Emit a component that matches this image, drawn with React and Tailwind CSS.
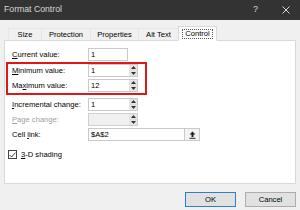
import React from 'react';

const font = { fontFamily: '"Liberation Sans", Arial, sans-serif' };

function Spinner() {
    return (
        <div className="flex flex-col w-[8px] h-full border-l border-[#e3e3e3] bg-[#f3f3f3]">
            <div className="flex-1 flex items-center justify-center border-b border-[#dcdcdc] bg-[#e6e6e6]">
                <svg width="5" height="3" viewBox="0 0 5 3"><path d="M0 3 L2.5 0 L5 3 Z" fill="#333" /></svg>
            </div>
            <div className="flex-1 flex items-center justify-center bg-[#e6e6e6]">
                <svg width="5" height="3" viewBox="0 0 5 3"><path d="M0 0 L2.5 3 L5 0 Z" fill="#333" /></svg>
            </div>
        </div>
    );
}

function Row({ label, value, spin, disabled, width = 'w-[50px]', children }) {
    return (
        <div className="flex items-center h-[13px]">
            <div className={`w-[76px] text-[7.6px] leading-none ${disabled ? 'text-[#a0a0a0]' : 'text-black'}`}>
                {label}
            </div>
            <div
                className={`flex items-stretch h-full ${width} border ${disabled ? 'border-[#cfcfcf] bg-[#f0f0f0]' : 'border-[#c9c9c9] bg-white'}`}
            >
                <div className="flex-1 flex items-center pl-[2px] text-[7.6px] leading-none text-black">{value}</div>
                {spin && <Spinner />}
                {children}
            </div>
        </div>
    );
}

function Tab({ label, w, active }) {
    if (active) {
        return (
            <div className={`${w} h-[15px] -mb-px relative z-10 flex items-center justify-center bg-white border border-[#d9d9d9] border-b-white`}>
                <span className="px-[2px] border border-dotted border-[#555] text-[7.6px] leading-[8px] text-black">{label}</span>
            </div>
        );
    }
    return (
        <div className={`${w} h-[12px] mt-[3px] flex items-center justify-center bg-[#f0f0f0] border-t border-l border-[#e6e6e6] text-[7.6px] leading-none text-black`}>
            {label}
        </div>
    );
}

export default function App() {
    return (
        <div className="w-[300px] h-[210px] flex flex-col bg-[#f0f0f0] overflow-hidden" style={font}>
            {/* Title bar */}
            <div className="h-[20px] bg-[#333333] flex items-center justify-between pl-[4px] pr-[10px]">
                <span className="text-[8.7px] text-[#d8d8d8]">Format Control</span>
                <div className="flex items-center gap-[24px] text-[#d8d8d8]">
                    <span className="text-[9px]">?</span>
                    <svg width="8" height="8" viewBox="0 0 8 8"><path d="M0.5 0.5 L7.5 7.5 M7.5 0.5 L0.5 7.5" stroke="#d8d8d8" strokeWidth="1" /></svg>
                </div>
            </div>

            {/* Tabs */}
            <div className="flex items-end pl-[8px] mt-[6px] h-[14px]">
                <Tab label="Size" w="w-[33px]" />
                <Tab label="Protection" w="w-[49px]" />
                <Tab label="Properties" w="w-[48px]" />
                <Tab label="Alt Text" w="w-[40px]" />
                <Tab label="Control" w="w-[39px]" active />
            </div>

            {/* Panel */}
            <div className="mx-[4px] h-[144px] bg-white border border-[#d9d9d9] pt-[7px]">
                <div className="pl-[7px]">
                    <Row label={<><u>C</u>urrent value:</>} value="1" width="w-[40px]" />
                </div>
                <div className="ml-px mt-px w-[141px] border-2 border-[#e0161b] pl-[4px] pb-px flex flex-col gap-[2px]">
                    <Row label={<><u>M</u>inimum value:</>} value="1" spin />
                    <Row label={<>Ma<u>x</u>imum value:</>} value="12" spin />
                </div>
                <div className="pl-[7px] mt-[3px] flex flex-col gap-[2px]">
                    <Row label={<><u>I</u>ncremental change:</>} value="1" spin />
                    <Row label={<><u>P</u>age change:</>} value="" spin disabled />
                    <Row label={<>Cell <u>l</u>ink:</>} value="$A$2" width="w-[112px]">
                        <div className="w-[15px] flex items-center justify-center border-l border-[#c9c9c9] bg-[#f3f3f3]">
                            <svg width="7" height="8" viewBox="0 0 7 8">
                                <path d="M3.5 0.5 L6.5 3.5 H4.5 V6 H2.5 V3.5 H0.5 Z" fill="#222" />
                                <rect x="0.5" y="6.8" width="6" height="1" fill="#222" />
                            </svg>
                        </div>
                    </Row>
                    <div className="flex items-center gap-[4px] mt-[7px] -ml-[4px]">
                        <div className="w-[9px] h-[9px] border border-[#444] bg-white flex items-center justify-center">
                            <svg width="7" height="6" viewBox="0 0 7 6"><path d="M0.6 3 L2.6 5 L6.4 0.6" stroke="#333" strokeWidth="0.9" fill="none" /></svg>
                        </div>
                        <span className="text-[7.6px] leading-none text-black"><u>3</u>-D shading</span>
                    </div>
                </div>
            </div>

            {/* Buttons */}
            <div className="flex justify-end gap-[9px] pr-[4px] mt-[8px]">
                <button className="w-[51px] h-[15px] bg-[#e1e1e1] border border-[#2b7fd0] text-[7.6px] text-black leading-none">OK</button>
                <button className="w-[51px] h-[15px] bg-[#e1e1e1] border border-[#adadad] text-[7.6px] text-black leading-none">Cancel</button>
            </div>
        </div>
    );
}
